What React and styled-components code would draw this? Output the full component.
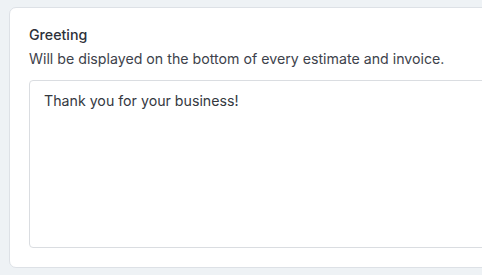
import React from "react";
import styled, { createGlobalStyle } from "styled-components";

const Global = createGlobalStyle`
  html, body { margin: 0; padding: 0; background: #eef2f5; overflow: hidden; }
  body { font-family: Inter, "Noto Sans", sans-serif; }
`;

const Page = styled.div`
  padding: 7px 0 0 9px;
  width: 700px;
`;

const Card = styled.section`
  box-sizing: border-box;
  width: 620px;
  height: 261px;
  background: #fff;
  border: 1px solid #dde1e6;
  border-radius: 7px;
  padding: 17px 0 0 19px;
  display: flex;
  flex-direction: column;
`;

const Label = styled.div`
  font-size: 14.2px;
  font-weight: 500;
  color: #2d3139;
  line-height: 20px;
`;

const Help = styled.div`
  margin-top: 4px;
  font-size: 14.2px;
  color: #3d424b;
  line-height: 20px;
`;

const Area = styled.textarea`
  box-sizing: border-box;
  margin-top: 11px;
  width: 560px;
  height: 168px;
  flex: none;
  border: 1px solid #dadde1;
  border-radius: 4px;
  padding: 10px 14px;
  font-family: Inter, "Noto Sans", sans-serif;
  font-size: 14.2px;
  line-height: 20px;
  color: #34383f;
  resize: none;
  outline: none;
`;

export default function App() {
  return (
    <Page>
      <Global />
      <Card>
        <Label>Greeting</Label>
        <Help>Will be displayed on the bottom of every estimate and invoice.</Help>
        <Area defaultValue="Thank you for your business!" />
      </Card>
    </Page>
  );
}
